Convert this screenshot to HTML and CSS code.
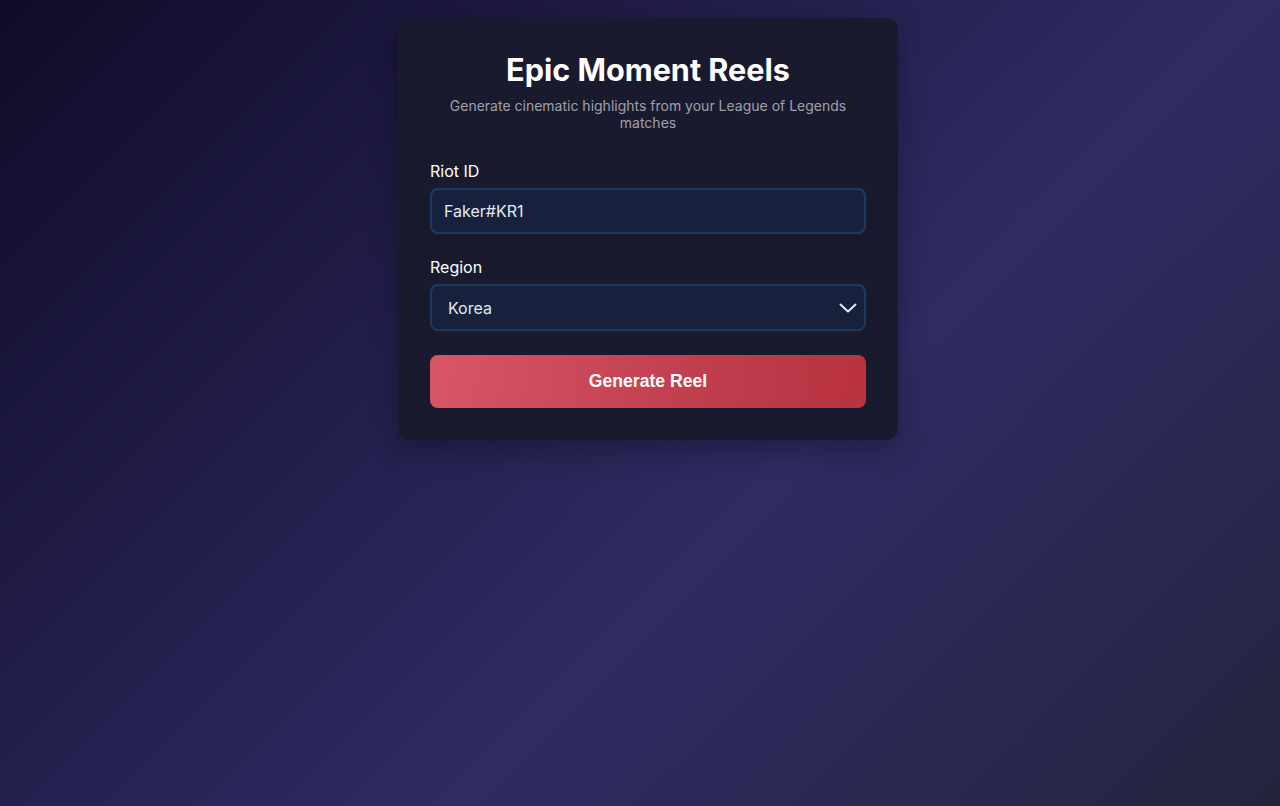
FILE: index.html
```html
<!DOCTYPE html>
<html>
<head>
<meta charset="utf-8">
<link rel="stylesheet" href="styles.css">
</head>
<body>
<main class="page">
  <section class="card">
    <h1 class="title">Epic Moment Reels</h1>
    <p class="subtitle">Generate cinematic highlights from your League of Legends matches</p>
    <div class="group">
      <label class="label">Riot ID</label>
      <div class="field">Faker#KR1</div>
    </div>
    <div class="group group-last">
      <label class="label">Region</label>
      <div class="field select">
        <span class="select-text">Korea</span>
        <svg class="chev" width="18" height="10" viewBox="0 0 18 10"><path d="M1.5 1.5 L9 8.5 L16.5 1.5" fill="none" stroke="#e8e8ee" stroke-width="2" stroke-linecap="round" stroke-linejoin="round"/></svg>
      </div>
    </div>
    <button class="btn">Generate Reel</button>
  </section>
</main>
</body>
</html>
```
FILE: styles.css
```css
html, body {
  margin: 0;
  height: 100%;
}
body {
  background: linear-gradient(135deg, #0f0c29 0%, #302b63 60%, #24243e 100%);
  font-family: Inter, "Noto Sans", sans-serif;
  color: #fff;
}
.page {
  display: flex;
  justify-content: center;
  padding: 18px 0 0 16px;
  min-height: 806px;
  box-sizing: border-box;
}
.card {
  width: 500px;
  height: 422px;
  box-sizing: border-box;
  padding: 32px;
  background: #1a1a2e;
  border-radius: 12px;
  box-shadow: 0 10px 30px rgba(0, 0, 0, 0.3);
}
.title {
  margin: 1px 0 8px;
  font-size: 30.6px;
  line-height: 38px;
  font-weight: 700;
  text-align: center;
  letter-spacing: 0;
}
.subtitle {
  margin: 0 0 30px;
  font-size: 14px;
  line-height: 17px;
  color: #a0a0aa;
  text-align: center;
}
.group {
  margin-bottom: 23px;
}
.group-last {
  margin-bottom: 24px;
}
.label {
  display: block;
  font-size: 16px;
  line-height: 20px;
  margin-bottom: 7px;
  color: #fff;
}
.field {
  height: 46px;
  box-sizing: border-box;
  border: 2px solid #1e3a5f;
  border-radius: 8px;
  background: #16213e;
  padding: 0 12px;
  display: flex;
  align-items: center;
  font-size: 16px;
  color: #e8e8ee;
}
.select {
  height: 47px;
  padding: 0 7px 0 16px;
  justify-content: space-between;
}
.chev {
  display: block;
}
.btn {
  display: block;
  width: 100%;
  height: 53px;
  border: none;
  border-radius: 8px;
  background: linear-gradient(100deg, #d95667 0%, #c2404f 55%, #b8323f 100%);
  color: #fff;
  font-family: "Liberation Sans", Arial, sans-serif;
  font-weight: 700;
  font-size: 17.6px;
}
```
